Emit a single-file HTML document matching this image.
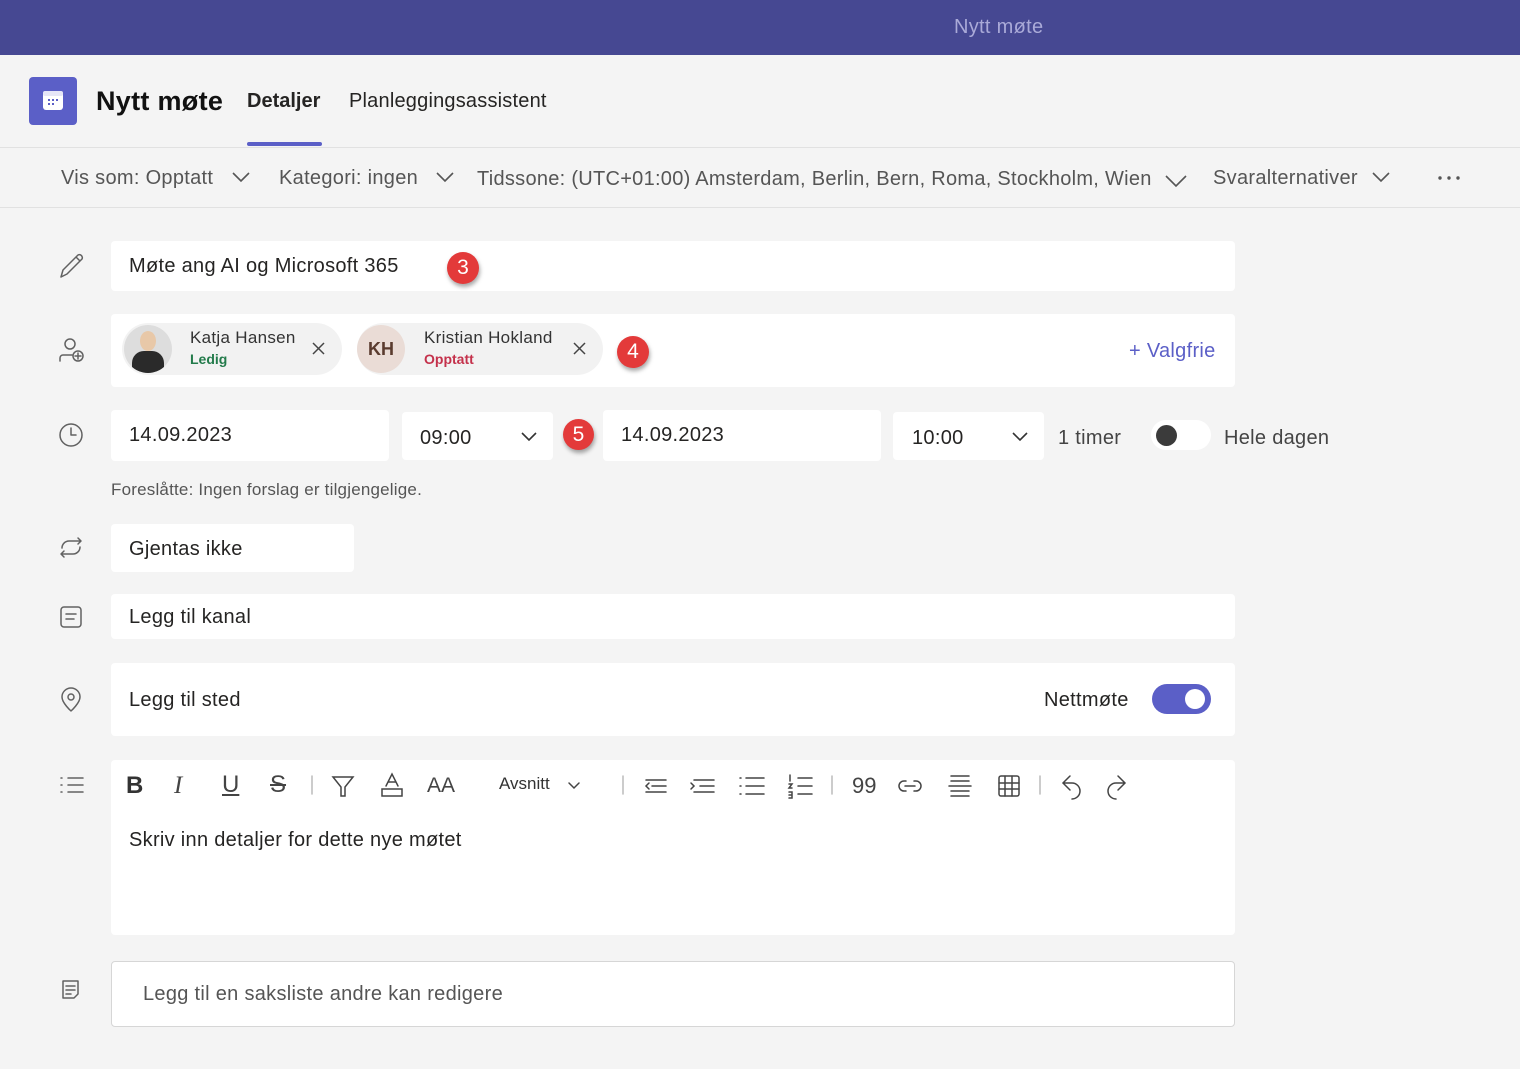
<!DOCTYPE html>
<html><head><meta charset="utf-8"><style>
*{box-sizing:border-box;margin:0;padding:0}
body{width:1520px;height:1069px;background:#f4f4f4;font-family:"Liberation Sans",sans-serif;color:#252423;position:relative;overflow:hidden}
.a{position:absolute;white-space:nowrap}
.box{position:absolute;background:#fff;border-radius:4px}
.t{font-size:20px;color:#252423;letter-spacing:.3px}
.ic{position:absolute}
.badge{position:absolute;width:32px;height:32px;border-radius:50%;background:#e33a3a;color:#fff;font-size:21px;text-align:center;line-height:32px;box-shadow:1px 3px 4px rgba(0,0,0,.35)}
</style></head><body>
<div class="a" style="left:0;top:0;width:1520px;height:55px;background:#464892"></div>
<div class="a" style="left:954px;top:16px;font-size:20px;color:#aaaad8;letter-spacing:.3px">Nytt møte</div>

<div class="a" style="left:29px;top:77px;width:48px;height:48px;background:#5b5fc7;border-radius:4px"></div>
<svg class="ic" style="left:29px;top:77px" width="48" height="48" viewBox="0 0 48 48"><rect x="14" y="14" width="20" height="19" rx="3" fill="#fff"/><rect x="14" y="14" width="20" height="5" rx="2" fill="#e6e6f7"/><g fill="#5b5fc7"><rect x="19" y="22" width="2" height="2"/><rect x="23" y="22" width="2" height="2"/><rect x="27" y="22" width="2" height="2"/><rect x="19" y="26" width="2" height="2"/><rect x="23" y="26" width="2" height="2"/></g></svg>
<div class="a" style="left:96px;top:86px;font-size:27px;font-weight:bold;color:#111;letter-spacing:.3px">Nytt møte</div>
<div class="a" style="left:247px;top:90px;font-size:20px;font-weight:bold;color:#252423">Detaljer</div>
<div class="a" style="left:247px;top:142px;width:75px;height:4px;background:#5b5fc7;border-radius:2px"></div>
<div class="a" style="left:349px;top:90px;font-size:20px;color:#252423;letter-spacing:.2px">Planleggingsassistent</div>
<div class="a" style="left:0;top:147px;width:1520px;height:1px;background:#e1e1e1"></div>
<div class="a" style="left:0;top:207px;width:1520px;height:1px;background:#e1e1e1"></div>

<div class="a" style="left:61px;top:167px;font-size:20px;color:#555;letter-spacing:.3px">Vis som: Opptatt</div>
<div class="a" style="left:279px;top:167px;font-size:20px;color:#555;letter-spacing:.3px">Kategori: ingen</div>
<div class="a" style="left:477px;top:168px;font-size:20px;color:#555;letter-spacing:.28px">Tidssone: (UTC+01:00) Amsterdam, Berlin, Bern, Roma, Stockholm, Wien</div>
<div class="a" style="left:1213px;top:167px;font-size:20px;color:#555;letter-spacing:.3px">Svaralternativer</div>
<svg class="ic" style="left:0;top:0" width="1520" height="210"><g fill="none" stroke="#555" stroke-width="1.6"><path d="M233 173l8 8 8-8"/><path d="M437 173l8 8 8-8"/><path d="M1166 176l10 10 10-10"/><path d="M1373 173l8 8 8-8"/></g><g fill="#555"><circle cx="1440" cy="178" r="1.7"/><circle cx="1449" cy="178" r="1.7"/><circle cx="1458" cy="178" r="1.7"/></g></svg>

<svg class="ic" style="left:0;top:0" width="110" height="1069"><g fill="none" stroke="#616161" stroke-width="1.5" stroke-linecap="round" stroke-linejoin="round">
<path d="M61 277l2-7 15-15a3 3 0 0 1 4 4l-15 15z M76 257l4 4"/>
<circle cx="70" cy="344" r="5"/><path d="M60 361v-3a3 3 0 0 1 3-3h9"/><circle cx="78" cy="356" r="5"/><path d="M78 353v6M75 356h6"/>
<circle cx="71" cy="435" r="11"/><path d="M71 428v7h5"/>
<path d="M62 548a7 7 0 0 1 7-7h12l-3-3M81 541l-3 3M80 547a7 7 0 0 1-7 7H61l3 3M61 554l3-3"/>
<rect x="61" y="607" width="20" height="20" rx="3"/><path d="M66 614h10M66 619h8"/>
<path d="M71 711s-9-8-9-14a9 9 0 0 1 18 0c0 6-9 14-9 14z"/><circle cx="71" cy="697" r="3"/>
<path d="M68 778h15M68 785h15M68 792h15"/><path d="M61 778h1M61 785h1M61 792h1"/>
<path d="M63 981h15v13l-4 4H63z M66 986h9M66 990h9M66 994h5"/>
</g></svg>

<div class="box" style="left:111px;top:241px;width:1124px;height:50px"></div>
<div class="a t" style="left:129px;top:255px">Møte ang AI og Microsoft 365</div>
<div class="badge" style="left:447px;top:252px">3</div>

<div class="box" style="left:111px;top:314px;width:1124px;height:73px"></div>
<div class="a" style="left:122px;top:323px;width:220px;height:52px;background:#f2f2f2;border-radius:26px"></div>
<div class="a" style="left:124px;top:325px;width:48px;height:48px;border-radius:50%;background:#ddd;overflow:hidden"><div style="position:absolute;left:16px;top:6px;width:16px;height:20px;border-radius:50%;background:#e8c8a8"></div><div style="position:absolute;left:8px;top:26px;width:32px;height:26px;border-radius:12px 12px 0 0;background:#2a2a2a"></div></div>
<div class="a" style="left:190px;top:328px;font-size:17px;color:#333;letter-spacing:.3px">Katja Hansen</div>
<div class="a" style="left:190px;top:351px;font-size:14px;color:#237b4b;font-weight:bold">Ledig</div>
<div class="a" style="left:357px;top:323px;width:246px;height:52px;background:#f2f2f2;border-radius:26px"></div>
<div class="a" style="left:357px;top:325px;width:48px;height:48px;border-radius:50%;background:#eadcd6;text-align:center;line-height:48px;font-size:18px;font-weight:bold;color:#5a3b2e">KH</div>
<div class="a" style="left:424px;top:328px;font-size:17px;color:#333;letter-spacing:.3px">Kristian Hokland</div>
<div class="a" style="left:424px;top:351px;font-size:14px;color:#c4314b;font-weight:bold">Opptatt</div>
<svg class="ic" style="left:0;top:0" width="700" height="400"><g stroke="#444" stroke-width="1.5"><path d="M313 343l11 11M324 343l-11 11M574 343l11 11M585 343l-11 11"/></g></svg>
<div class="badge" style="left:617px;top:336px">4</div>
<div class="a" style="left:1129px;top:340px;font-size:20px;color:#5b5fc7;letter-spacing:.3px">+ Valgfrie</div>

<div class="box" style="left:111px;top:410px;width:278px;height:51px"></div>
<div class="a t" style="left:129px;top:424px">14.09.2023</div>
<div class="box" style="left:402px;top:412px;width:151px;height:48px"></div>
<div class="a t" style="left:420px;top:427px">09:00</div>
<div class="badge" style="left:563px;top:419px;width:31px;height:31px;line-height:31px">5</div>
<div class="box" style="left:603px;top:410px;width:278px;height:51px"></div>
<div class="a t" style="left:621px;top:424px">14.09.2023</div>
<div class="box" style="left:893px;top:412px;width:151px;height:48px"></div>
<div class="a t" style="left:912px;top:427px">10:00</div>
<svg class="ic" style="left:0;top:0" width="1100" height="600"><g fill="none" stroke="#333" stroke-width="1.6"><path d="M522 433l7 7 7-7M1013 433l7 7 7-7M322 543l7 7 7-7"/></g></svg>
<div class="a t" style="left:1058px;top:427px;color:#444">1 timer</div>
<div class="a" style="left:1151px;top:420px;width:60px;height:30px;background:#fff;border-radius:15px"></div>
<div class="a" style="left:1156px;top:425px;width:21px;height:21px;background:#3b3b3b;border-radius:50%"></div>
<div class="a t" style="left:1224px;top:427px;color:#444">Hele dagen</div>
<div class="a" style="left:111px;top:480px;font-size:17px;color:#555;letter-spacing:.2px">Foreslåtte: Ingen forslag er tilgjengelige.</div>

<div class="box" style="left:111px;top:524px;width:243px;height:48px"></div>
<div class="a t" style="left:129px;top:538px">Gjentas ikke</div>

<div class="box" style="left:111px;top:594px;width:1124px;height:45px"></div>
<div class="a t" style="left:129px;top:606px">Legg til kanal</div>

<div class="box" style="left:111px;top:663px;width:1124px;height:73px"></div>
<div class="a t" style="left:129px;top:689px">Legg til sted</div>
<div class="a t" style="left:1044px;top:689px">Nettmøte</div>
<div class="a" style="left:1152px;top:684px;width:59px;height:30px;background:#5b5fc7;border-radius:15px"></div>
<div class="a" style="left:1185px;top:689px;width:20px;height:20px;background:#fff;border-radius:50%"></div>

<div class="box" style="left:111px;top:760px;width:1124px;height:175px"></div>
<div class="a" style="left:126px;top:772px;font-size:24px;font-weight:bold;color:#333">B</div>
<div class="a" style="left:174px;top:772px;font-size:25px;font-style:italic;font-family:'Liberation Serif',serif;color:#444">I</div>
<div class="a" style="left:222px;top:771px;font-size:24px;text-decoration:underline;color:#444">U</div>
<div class="a" style="left:270px;top:771px;font-size:24px;text-decoration:line-through;color:#444">S</div>
<div class="a" style="left:427px;top:774px;font-size:21px;color:#444">AA</div>
<div class="a" style="left:499px;top:774px;font-size:17px;color:#333">Avsnitt</div>
<div class="a" style="left:852px;top:773px;font-size:22px;color:#444;font-family:'Liberation Sans',sans-serif">99</div>
<svg class="ic" style="left:0;top:0" width="1200" height="820"><g fill="none" stroke="#444" stroke-width="1.5" stroke-linecap="round">
<path d="M312 776v18M623 776v18M832 776v18M1040 776v18" stroke="#bbb"/>
<path d="M333 777h20l-8 10v9h-4v-9z"/>
<path d="M386 786l6-12 6 12M388 782h8M382 789h20v7h-20z"/>
<path d="M569 783l5 5 5-5"/>
<path d="M646 780h20M652 786h14M646 792h20M649 783l-3 3 3 3"/>
<path d="M694 780h20M700 786h14M694 792h20M691 783l3 3-3 3"/>
<path d="M746 778h18M746 786h18M746 794h18M740 778h1M740 786h1M740 794h1"/>
<path d="M798 778h14M798 786h14M798 794h14M790 775v6M789 784h3l-3 4h3M789 792h3v6h-3M789 795h3"/>
<path d="M906 781h-2a5 5 0 0 0 0 10h2M914 781h2a5 5 0 0 1 0 10h-2M905 786h10"/>
<path d="M951 776h18M951 781h18M949 786h22M951 791h18M951 796h18"/>
<rect x="999" y="776" width="20" height="20" rx="2"/><path d="M1005 776v20M1012 776v20M999 783h20M999 789h20"/>
<path d="M1070 776l-7 7 7 7M1063 783h9a8 8 0 0 1 0 16"/>
<path d="M1118 776l7 7-7 7M1125 783h-9a8 8 0 0 0 0 16"/>
</g></svg>
<div class="a t" style="left:129px;top:829px">Skriv inn detaljer for dette nye møtet</div>

<div class="box" style="left:111px;top:961px;width:1124px;height:66px;border:1px solid #d6d6d6"></div>
<div class="a t" style="left:143px;top:983px;color:#555">Legg til en saksliste andre kan redigere</div>
</body></html>
